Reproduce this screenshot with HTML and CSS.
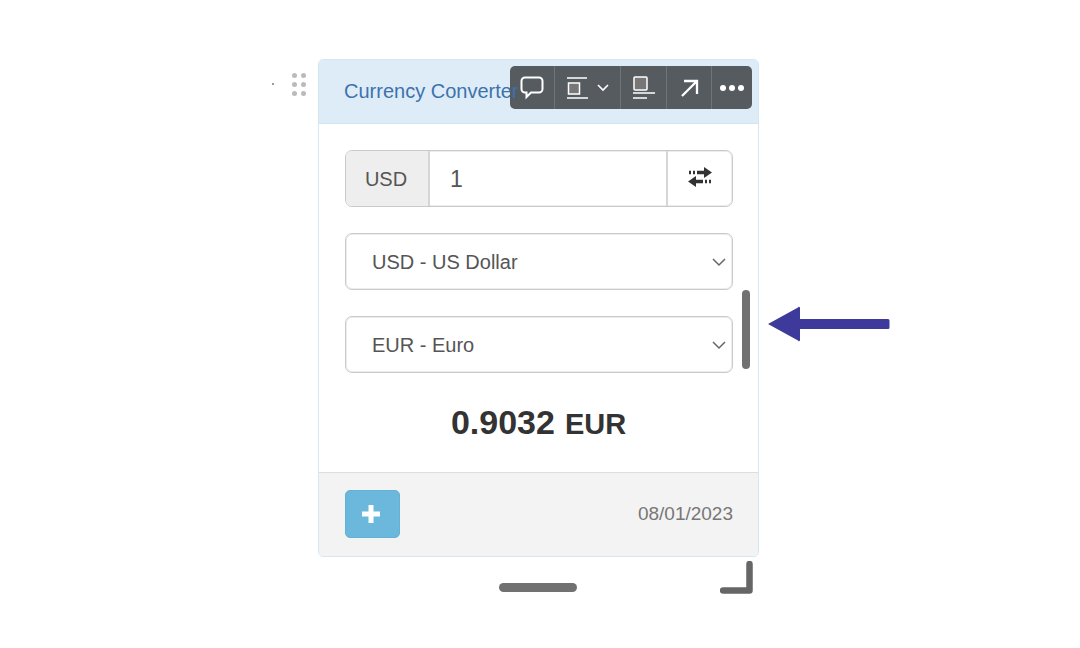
FILE: index.html
```html
<!DOCTYPE html>
<html lang="en">
<head>
    <meta charset="UTF-8">
    <title>Currency Converter</title>
    <link rel="stylesheet" href="styles.css">
</head>
<body>
    <div class="widget">
        <span class="speck"></span>
        <div class="drag-dots">
            <i></i><i></i><i></i><i></i><i></i><i></i>
        </div>

        <div class="card">
            <div class="card-header"><span class="card-title">Currency Converter</span></div>
            <div class="card-body">
                <div class="input-group">
                    <div class="addon">USD</div>
                    <div class="amount">1</div>
                    <div class="swap">
                        <svg width="24" height="20" viewBox="0 0 24 20">
                            <path d="M1 5.500h2M5 5.500h2M9 5.500h8" fill="none" stroke="#333" stroke-width="3.500"/>
                            <path d="M16 0l8 5.500-8 5.500z" fill="#333"/>
                            <path d="M23 14.500h-2M19 14.500h-2M15 14.500H7" fill="none" stroke="#333" stroke-width="3.500"/>
                            <path d="M8 9l-8 5.500 8 5.500z" fill="#333"/>
                        </svg>
                    </div>
                </div>
                <div class="select">
                    USD - US Dollar
                    <svg class="caret" width="14" height="9" viewBox="0 0 14 9"><path d="M1 1l6 6 6-6" fill="none" stroke="#666" stroke-width="1.500"/></svg>
                </div>
                <div class="select">
                    EUR - Euro
                    <svg class="caret" width="14" height="9" viewBox="0 0 14 9"><path d="M1 1l6 6 6-6" fill="none" stroke="#666" stroke-width="1.500"/></svg>
                </div>
                <div class="result"><span class="value">0.9032</span><span class="unit">EUR</span></div>
            </div>
            <div class="card-footer">
                <div class="add-button">
                    <svg width="18" height="18" viewBox="0 0 18 18"><path d="M9 0v18M0 9h18" stroke="#fff" stroke-width="5"/></svg>
                </div>
                <div class="date">08/01/2023</div>
            </div>
        </div>

        <!-- Editor toolbar over the card -->
        <div class="toolbar">
            <div class="tool tool-comment">
                <svg width="26" height="26" viewBox="0 0 26 26"><path d="M6 2.500h14a3.500 3.500 0 0 1 3.500 3.500v8a3.500 3.500 0 0 1-3.500 3.500h-8l-4.500 4.500v-4.500H6A3.500 3.500 0 0 1 2.500 14V6A3.500 3.500 0 0 1 6 2.500z" fill="none" stroke="#fff" stroke-width="2"/></svg>
            </div>
            <div class="tool tool-align">
                <svg width="24" height="24" viewBox="0 0 24 24">
                    <path d="M1 2h20M1 22h21" stroke="#fff" stroke-width="1.500"/>
                    <rect x="2.500" y="7" width="11" height="11" fill="#777" stroke="#fff" stroke-width="1.500"/>
                </svg>
                <svg width="12" height="8" viewBox="0 0 12 8"><path d="M1 1l5 5 5-5" fill="none" stroke="#fff" stroke-width="1.600"/></svg>
            </div>
            <div class="tool tool-wrap">
                <svg width="24" height="26" viewBox="0 0 24 26">
                    <rect x="2" y="2" width="13" height="13" rx="1" fill="#777" stroke="#fff" stroke-width="1.500"/>
                    <path d="M1 18h22M1 23h14" stroke="#fff" stroke-width="1.500"/>
                </svg>
            </div>
            <div class="tool tool-open">
                <svg width="20" height="20" viewBox="0 0 20 20"><path d="M3 18L17 4M5 3h13v13" fill="none" stroke="#fff" stroke-width="2.300"/></svg>
            </div>
            <div class="tool tool-more">
                <svg width="26" height="8" viewBox="0 0 26 8"><circle cx="4" cy="4" r="3" fill="#fff"/><circle cx="13" cy="4" r="3" fill="#fff"/><circle cx="22" cy="4" r="3" fill="#fff"/></svg>
            </div>
        </div>

        <!-- Resize handles -->
        <div class="handle-right"></div>
        <div class="handle-bottom"></div>
        <svg class="handle-corner" width="33" height="34" viewBox="0 0 33 34"><path d="M3 29.500h26.500V3" fill="none" stroke="#666" stroke-width="6.500" stroke-linecap="round" stroke-linejoin="round"/></svg>

        <svg class="arrow" width="124" height="38" viewBox="0 0 124 38"><path d="M1 19L31 2.500a1 1 0 0 1 2 1V14h88a1.500 1.500 0 0 1 1.500 1.500v7a1.500 1.500 0 0 1-1.500 1.500H33v10.500a1 1 0 0 1-2 1z" fill="#3d3a9c"/></svg>
    </div>
</body>
</html>
```

FILE: styles.css
```css
html, body {
    margin: 0;
    height: 100%;
    background-color: #ffffff;
}
body {
    font-family: 'Liberation Sans', Arial, sans-serif;
    color: #555555;
    padding: 59px 0 0 318px;
    box-sizing: border-box;
    overflow: hidden;
}
.widget {
    position: relative;
    width: 441px;
}
.card {
    width: 441px;
    height: 498px;
    box-sizing: border-box;
    border: 1px solid #d4e8f2;
    border-radius: 5px;
    display: flex;
    flex-direction: column;
    overflow: hidden;
}
.card-header {
    height: 64px;
    flex: none;
    box-sizing: border-box;
    padding: 19px 25px 0;
    font-size: 20px;
    line-height: 24px;
    color: #3d72ad;
    background-color: #deecf7;
    border-bottom: 1px solid #d4e3ee;
}
/* the title stays readable on top of the toolbar */
.card-title {
    position: relative;
    z-index: 2;
}
.card-body {
    flex: 1;
    padding: 26px 25px 0 26px;
    display: flex;
    flex-direction: column;
    gap: 26px;
}
.input-group, .select {
    height: 57px;
    box-sizing: border-box;
    border: 1px solid #cacaca;
    box-shadow: inset 0 0 0 1px #ececec;
    border-radius: 7px;
    font-size: 20px;
    flex: none;
}
.input-group {
    display: flex;
    overflow: hidden;
}
.addon {
    width: 84px;
    box-sizing: border-box;
    padding: 2px 2px 0 0;
    border-right: 2px solid #d6d6d6;
    background-color: #eeeeee;
    display: flex;
    align-items: center;
    justify-content: center;
}
.amount {
    flex: 1;
    padding: 1px 0 0 20px;
    font-size: 23px;
    line-height: 55px;
}
.swap {
    width: 66px;
    box-sizing: border-box;
    border-left: 2px solid #d6d6d6;
    display: flex;
    align-items: center;
    justify-content: center;
    padding-bottom: 4px;
}
.select {
    display: flex;
    align-items: center;
    justify-content: space-between;
    padding: 2px 6px 0 26px;
}
.result {
    margin-top: 3px;
    padding-right: 1px;
    text-align: center;
    font-weight: bold;
    color: #333333;
    line-height: 40px;
}
.value {
    font-size: 34px;
}
.unit {
    font-size: 29px;
    margin-left: 10px;
}
.card-footer {
    height: 84px;
    flex: none;
    box-sizing: border-box;
    padding: 17px 25px 0 26px;
    background-color: #f3f3f3;
    border-top: 1px solid #dddddd;
    display: flex;
    justify-content: space-between;
}
.add-button {
    width: 55px;
    height: 48px;
    box-sizing: border-box;
    padding-right: 3px;
    border: 1px solid #62b2d6;
    border-radius: 5px;
    background-color: #6bb8dc;
    display: flex;
    align-items: center;
    justify-content: center;
}
.date {
    font-size: 19px;
    line-height: 47px;
    color: #777777;
}

/* toolbar */
.toolbar {
    position: absolute;
    z-index: 1;
    left: 192px;
    top: 7px;
    width: 242px;
    height: 43px;
    display: flex;
    border-radius: 5px;
    background-color: #565b60;
}
.tool {
    box-sizing: border-box;
    display: flex;
    align-items: center;
    justify-content: center;
    gap: 7px;
    border-right: 1px solid #6f7478;
}
.tool-comment { width: 45px; }
.tool-align { width: 66px; }
.tool-wrap { width: 46px; }
.tool-open { width: 45px; }
.tool-more { width: 40px; border-right: none; }

/* handles */
.speck {
    position: absolute;
    left: -46px;
    top: 24px;
    width: 2px;
    height: 2px;
    background-color: #999999;
}
.drag-dots {
    position: absolute;
    left: -26px;
    top: 14px;
    display: grid;
    grid-template-columns: 5px 5px;
    grid-auto-rows: 5px;
    gap: 4px 4px;
}
.drag-dots i {
    border-radius: 50%;
    background-color: #bbbbbb;
}
.handle-right {
    position: absolute;
    left: 424px;
    top: 231px;
    width: 8px;
    height: 79px;
    border-radius: 4px;
    background-color: #717171;
}
.handle-bottom {
    position: absolute;
    left: 181px;
    top: 524px;
    width: 78px;
    height: 9px;
    border-radius: 5px;
    background-color: #717171;
}
.handle-corner {
    position: absolute;
    left: 402px;
    top: 502px;
}
.arrow {
    position: absolute;
    left: 449px;
    top: 246px;
}
```
